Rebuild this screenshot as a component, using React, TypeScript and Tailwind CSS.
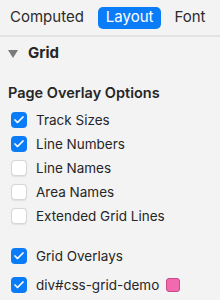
import { Check } from 'lucide-react';

type Option = { label: string; checked: boolean };

const overlayOptions: Option[] = [
  { label: 'Track Sizes', checked: true },
  { label: 'Line Numbers', checked: true },
  { label: 'Line Names', checked: false },
  { label: 'Area Names', checked: false },
  { label: 'Extended Grid Lines', checked: false },
];

function Box({ checked }: { checked: boolean }) {
  if (checked) {
    return (
      <span className="flex h-4 w-4 shrink-0 items-center justify-center rounded-[4px] bg-[#0b7cf7]">
        <Check size={12} strokeWidth={3.5} className="text-white" />
      </span>
    );
  }
  return (
    <span className="h-4 w-4 shrink-0 rounded-[4px] border border-[#d6d6d6] bg-white shadow-[0_0.5px_1px_rgba(0,0,0,0.08)]" />
  );
}

function Row({ label, checked, children }: { label: string; checked: boolean; children?: React.ReactNode }) {
  return (
    <div className="flex h-6 items-center pl-[11px]">
      <Box checked={checked} />
      <span className="ml-[9px]">{label}</span>
      {children}
    </div>
  );
}

export default function App() {
  return (
    <div
      className="h-[300px] w-[220px] overflow-hidden bg-[#f3f3f3] text-[13.5px] text-[#262626]"
      style={{ fontFamily: 'Inter, "Noto Sans", sans-serif' }}
    >
      <div className="flex h-[37px] items-center border-b-2 border-[#e2e2e2] pl-[10px] text-[15px]">
        <span className="text-[#2b2b2b]">Computed</span>
        <span className="ml-[14px] flex h-[22px] items-center rounded-[5px] bg-[#0b7cf7] px-[8px] text-white">
          Layout
        </span>
        <span className="ml-[13px] text-[#2b2b2b]">Font</span>
      </div>

      <div className="flex h-[31px] items-center pl-[8px] pt-[2px]">
        <span className="h-0 w-0 border-x-[5px] border-t-[8px] border-x-transparent border-t-[#7a7a7a]" />
        <span className="ml-[10px] text-[15px] font-bold">Grid</span>
      </div>

      <div className="mt-[14px] pl-[8px] text-[14.5px] font-semibold">Page Overlay Options</div>

      <div className="mt-[4px] flex flex-col">
        {overlayOptions.map((o) => (
          <Row key={o.label} label={o.label} checked={o.checked} />
        ))}
      </div>

      <div className="mt-[16px] flex flex-col">
        <Row label="Grid Overlays" checked />
        <div className="mt-[5px]">
          <Row label="div#css-grid-demo" checked>
            <span className="ml-[7px] h-[14px] w-[14px] rounded-[3px] border border-[#c9488a] bg-[#f26aae]" />
          </Row>
        </div>
      </div>
    </div>
  );
}
